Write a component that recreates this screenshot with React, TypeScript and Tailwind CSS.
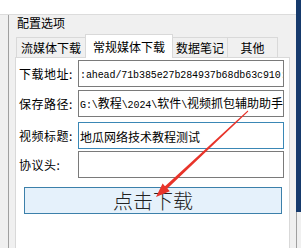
import React from "react";

const CJK = '"Noto Sans CJK SC", "Noto Sans", sans-serif';

function Mixed({ text }: { text: string }) {
  const parts: { s: string; ascii: boolean }[] = [];
  for (const ch of text) {
    const ascii = ch.charCodeAt(0) < 128;
    const last = parts[parts.length - 1];
    if (last && last.ascii === ascii) last.s += ch;
    else parts.push({ s: ch, ascii });
  }
  return (
    <span className="whitespace-pre">
      {parts.map((p, i) =>
        p.ascii ? (
          <span key={i} className="text-[10px] tracking-[-0.1px] font-['Liberation_Mono',monospace]">
            {p.s}
          </span>
        ) : (
          <span key={i} className="text-[12px] font-['Noto_Sans_CJK_SC',sans-serif]">
            {p.s}
          </span>
        )
      )}
    </span>
  );
}

function Row({
  label,
  value,
  focused,
  mt,
}: {
  label: string;
  value: string;
  focused?: boolean;
  mt: string;
}) {
  return (
    <div className={`flex items-center h-[27px] ${mt}`}>
      <div className="w-[61px] pl-[2px] text-[12px] leading-[14px] text-black tracking-[0.5px] font-['Noto_Sans_CJK_SC',sans-serif]">
        {label}
      </div>
      <div
        className={`w-[206px] h-[27px] flex items-center pl-[1px] overflow-hidden bg-white border ${
          focused ? "border-[#3a87b5]" : "border-[#7a7a7a]"
        } text-black leading-[14px]`}
      >
        <Mixed text={value} />
      </div>
    </div>
  );
}

export default function App() {
  return (
    <div
      className="w-[301px] h-[248px] flex overflow-hidden bg-[#f0f0f0] relative"
      style={{ fontFamily: CJK }}
    >
      <div className="w-[296px] flex flex-col">
        <div className="h-[15px] bg-white border-b border-[#dcdcdc] shrink-0" />
        <div className="flex flex-1 min-h-0">
          <div className="w-[15px] shrink-0">
            <div className="w-[9px] h-full border-r border-[#a0a0a0]" />
          </div>
          <div className="w-[275px] flex flex-col">
            <div className="h-[19px] pl-[2px] text-[12px] leading-[15px] text-black shrink-0">
              配置选项
            </div>
            <div className="h-[23px] flex items-end shrink-0 text-[12px] leading-[14px] text-black">
              <div className="ml-[1px] w-[70px] h-[20px] flex items-center justify-center bg-[#f0f0f0] border border-b-0 border-[#d9d9d9]">
                流媒体下载
              </div>
              <div className="w-[88px] h-[24px] -mb-[1px] relative z-10 flex items-center justify-center bg-white border border-b-0 border-[#d9d9d9] -ml-[1px]">
                常规媒体下载
              </div>
              <div className="w-[56px] h-[20px] flex items-center justify-center bg-[#f0f0f0] border border-b-0 border-[#d9d9d9] -ml-[1px]">
                数据笔记
              </div>
              <div className="w-[51px] h-[20px] flex items-center justify-center bg-[#f0f0f0] border border-b-0 border-[#d9d9d9] -ml-[1px]">
                其他
              </div>
            </div>
            <div className="flex-1 bg-white border-l border-t border-r border-[#d9d9d9] pt-[2px] pl-[1px]">
              <Row label="下载地址:" value=":ahead/71b385e27b284937b68db63c910:" mt="mt-0" />
              <Row label="保存路径:" value="G:\教程\2024\软件\视频抓包辅助助手" mt="mt-[3px]" />
              <Row label="视频标题:" value="地瓜网络技术教程测试" focused mt="mt-[5px]" />
              <Row label="协议头:" value="" mt="mt-[2px]" />
              <div className="mt-[9px] ml-[7px] w-[258px] h-[27px] flex items-center justify-center bg-[#e5f1fb] border border-[#3c80aa] text-[20px] leading-[24px] font-light text-[#222]">
                点击下载
              </div>
            </div>
          </div>
        </div>
      </div>
      <div className="w-[5px] flex flex-col">
        <div className="h-[212px] bg-[#163a6c]" />
        <div className="flex-1 border-l border-[#a0a0a0] bg-[#f0f0f0]" />
      </div>
      <svg
        className="absolute inset-0 pointer-events-none"
        width="301"
        height="248"
        viewBox="0 0 301 248"
      >
        <polygon
          points="248.3,111.4 167.4,188.6 169.8,191.3 156,197 162.6,183.6 165.0,186.2 247.7,110.6"
          fill="#e8342a"
        />
      </svg>
    </div>
  );
}
